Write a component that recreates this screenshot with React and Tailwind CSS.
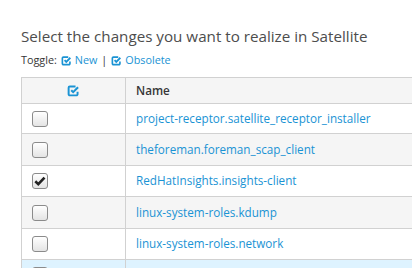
import React from "react";

const CheckSquareIcon = ({ className = "" }) => (
  <svg viewBox="0 0 16 16" className={className} fill="none">
    <path d="M13 9.5V12.5a1.5 1.5 0 0 1-1.5 1.5h-8A1.5 1.5 0 0 1 2 12.5v-8A1.5 1.5 0 0 1 3.5 3h7" stroke="currentColor" strokeWidth="2.4" />
    <path d="M5.2 7.6l2.4 2.4 6-6" stroke="currentColor" strokeWidth="2.6" />
  </svg>
);

const Checkbox = ({ checked }) => (
  <div className="w-[16px] h-[16px] rounded-[3px] border border-[#8b8b8b] bg-gradient-to-b from-[#ffffff] to-[#e4e4e4] flex items-center justify-center">
    {checked && (
      <svg viewBox="0 0 12 12" className="w-[12px] h-[12px]">
        <path d="M1.3 6.3l3 2.9 6.2-6.5" stroke="#222" strokeWidth="2.6" fill="none" />
      </svg>
    )}
  </div>
);

const rows = [
  { name: "project-receptor.satellite_receptor_installer", checked: false, bg: "bg-white", h: "h-[30px]" },
  { name: "theforeman.foreman_scap_client", checked: false, bg: "bg-[#f5f5f5]", h: "h-[32px]" },
  { name: "RedHatInsights.insights-client", checked: true, bg: "bg-white", h: "h-[31px]" },
  { name: "linux-system-roles.kdump", checked: false, bg: "bg-[#f5f5f5]", h: "h-[32px]" },
  { name: "linux-system-roles.network", checked: false, bg: "bg-white", h: "h-[31px]" },
  { name: "", checked: false, bg: "bg-[#def3ff]", h: "h-[31px]" },
];

export default function App() {
  return (
    <div className="w-[412px] h-[268px] overflow-hidden bg-white font-['Open_Sans',sans-serif] text-[#363636]">
      <div className="pl-[21px] pt-[26px]">
        <h4 className="text-[15.2px] leading-[20px] text-[#4d4d4d]">
          Select the changes you want to realize in Satellite
        </h4>
        <div className="mt-[7px] text-[10.8px] leading-[14px] flex items-center text-[#363636]">
          <span>Toggle:</span>
          <a className="ml-[4px] flex items-center text-[#1a93d4]">
            <CheckSquareIcon className="w-[11px] h-[11px]" />
            <span className="ml-[3px]">New</span>
          </a>
          <span className="mx-[4px]">|</span>
          <a className="flex items-center text-[#1a93d4]">
            <CheckSquareIcon className="w-[11px] h-[11px]" />
            <span className="ml-[3px]">Obsolete</span>
          </a>
        </div>
        <table className="mt-[10px] w-[420px] border-collapse border border-[#d1d1d1] text-[11.7px]">
          <thead>
            <tr className="bg-[#f5f5f5] h-[26px]">
              <th className="w-[104px] border border-[#d1d1d1] p-0">
                <div className="flex justify-center">
                  <CheckSquareIcon className="w-[13px] h-[13px] text-[#1a93d4]" />
                </div>
              </th>
              <th className="border border-[#d1d1d1] text-left pl-[10px] font-semibold text-[#363636]">Name</th>
            </tr>
          </thead>
          <tbody>
            {rows.map((r, i) => (
              <tr key={i} className={`${r.bg} ${r.h}`}>
                <td className="border border-[#d1d1d1] pl-[10px]">
                  <Checkbox checked={r.checked} />
                </td>
                <td className="border border-[#d1d1d1] pl-[10px] text-[#1a93d4]">{r.name}</td>
              </tr>
            ))}
          </tbody>
        </table>
      </div>
    </div>
  );
}
